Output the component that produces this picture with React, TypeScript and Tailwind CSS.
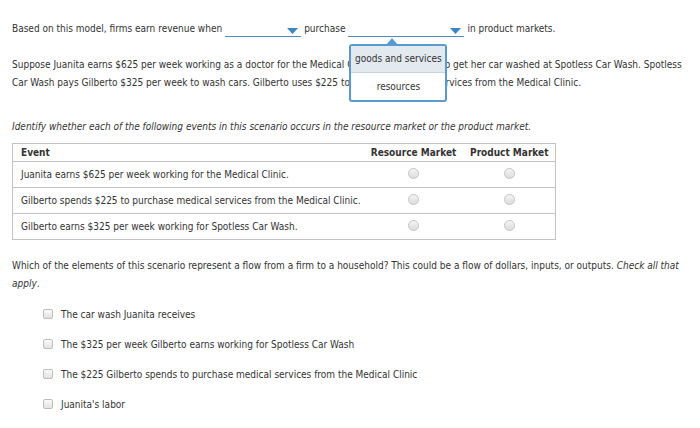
import * as React from "react";

const font = "font-['DejaVu_Sans_Condensed','DejaVu_Sans',sans-serif]";

function Dropdown({ width, children }: { width: string; children?: React.ReactNode }) {
  return (
    <span className={`relative inline-block align-baseline ${width} h-[14px] border-b border-[#4a8bc4] mx-[3px]`}>
      <svg
        className="absolute right-[3px] top-[5px]"
        width="11"
        height="6"
        viewBox="0 0 11 6"
      >
        <polygon points="0,0 11,0 5.5,6" fill="#3d86c6" />
      </svg>
      {children}
    </span>
  );
}

function Radio() {
  return (
    <span className="inline-block size-[11px] rounded-full border border-[#c4c4c4] bg-gradient-to-b from-[#f4f4f4] to-[#dcdcdc]" />
  );
}

function Checkbox() {
  return (
    <span className="inline-block size-[10px] rounded-[2px] border border-[#bdbdbd] bg-gradient-to-b from-[#fafafa] to-[#e2e2e2]" />
  );
}

const events = [
  "Juanita earns $625 per week working for the Medical Clinic.",
  "Gilberto spends $225 to purchase medical services from the Medical Clinic.",
  "Gilberto earns $325 per week working for Spotless Car Wash.",
];

const options = [
  "The car wash Juanita receives",
  "The $325 per week Gilberto earns working for Spotless Car Wash",
  "The $225 Gilberto spends to purchase medical services from the Medical Clinic",
  "Juanita's labor",
];

export default function App() {
  return (
    <div className={`w-[700px] h-[428px] bg-white text-[#333] text-[10px] ${font} pl-3 pr-[8px] pt-[21px] overflow-hidden`}>
      {/* Question 1 */}
      <div className="leading-[16px] flex items-end">
        <span>Based on this model, firms earn revenue when</span>
        <Dropdown width="w-[76px]" />
        <span>purchase</span>
        <Dropdown width="w-[116px]">
          <div className="absolute left-[1px] top-[21px] w-[98px] z-10">
            <svg
              className="absolute left-[37px] -top-[6px]"
              width="12"
              height="7"
              viewBox="0 0 12 7"
            >
              <polygon points="0,7 6,0 12,7" fill="#5a9ad2" />
            </svg>
            <div className="border-2 border-[#5a9ad2] rounded-[3px] bg-white overflow-hidden">
              <div className="h-[27px] flex items-center justify-center bg-[#e2e9ef] border-b border-[#c9d3dc]">
                goods and services
              </div>
              <div className="h-[27px] flex items-center justify-center">resources</div>
            </div>
          </div>
        </Dropdown>
        <span>in product markets.</span>
      </div>

      {/* Scenario */}
      <p className="mt-[19px] leading-[18px]">
        Suppose Juanita earns $625 per week working as a doctor for the Medical Clinic. She pays $20 to get her car washed at Spotless Car Wash. Spotless Car Wash pays Gilberto $325 per week to wash cars. Gilberto uses $225 to purchase medical services from the Medical Clinic.
      </p>

      <p className="mt-[26px] italic leading-[18px]">
        Identify whether each of the following events in this scenario occurs in the resource market or the product market.
      </p>

      {/* Table */}
      <table className="mt-[7px] w-[543px] table-fixed border-collapse border border-[#c2c2c2]">
        <colgroup>
          <col className="w-[351px]" />
          <col className="w-[100px]" />
          <col className="w-[92px]" />
        </colgroup>
        <thead>
          <tr className="h-[18px] border-b border-[#c2c2c2]">
            <th className="text-left font-bold px-[8px]">Event</th>
            <th className="font-bold text-center whitespace-nowrap">Resource Market</th>
            <th className="font-bold text-center whitespace-nowrap">Product Market</th>
          </tr>
        </thead>
        <tbody>
          {events.map((e) => (
            <tr key={e} className="h-[26px] border-b border-[#c2c2c2]">
              <td className="px-[8px] whitespace-nowrap">{e}</td>
              <td className="text-center leading-none">
                <Radio />
              </td>
              <td className="text-center leading-none">
                <Radio />
              </td>
            </tr>
          ))}
        </tbody>
      </table>

      {/* Question 3 */}
      <p className="mt-[17px] leading-[18px]">
        Which of the elements of this scenario represent a flow from a firm to a household? This could be a flow of dollars, inputs, or outputs.{" "}
        <span className="italic">Check all that apply</span>.
      </p>

      <ul className="mt-[12px] pl-[31px] flex flex-col gap-[12px]">
        {options.map((o) => (
          <li key={o} className="flex items-center gap-[8px] h-[18px]">
            <Checkbox />
            <span>{o}</span>
          </li>
        ))}
      </ul>
    </div>
  );
}
